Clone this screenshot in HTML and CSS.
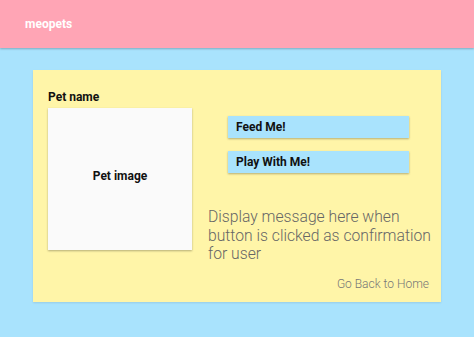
FILE: index.html
```html
<!DOCTYPE html>
<html lang="en">
<head>
    <meta charset="UTF-8">
    <meta name="viewport" content="width=device-width, initial-scale=1.0">
    <title>meopets</title>
    <link rel="stylesheet" href="styles.css">
</head>
<body>
    <header class="topbar">
        <span class="brand">meopets</span>
    </header>

    <div class="card">
        <h2 class="pet-name">Pet name</h2>
        <div class="row">
            <div class="pet-image"><span>Pet image</span></div>
            <div class="side">
                <div class="actions">
                    <button class="action">Feed Me!</button>
                    <button class="action">Play With Me!</button>
                </div>
                <p class="message">Display message here when button is clicked as confirmation for user</p>
            </div>
        </div>
        <div class="footer">
            <a href="#" class="home-link">Go Back to Home</a>
        </div>
    </div>
</body>
</html>
```

FILE: styles.css
```css
body {
    font-family: Roboto, "Liberation Sans", Arial, sans-serif;
    margin: 0;
    padding: 0;
    background-color: #a9e3fd;
    height: 337px;
    overflow: hidden;
}

.topbar {
    height: 48px;
    background-color: #ffa5b5;
    box-shadow: 0 1px 2px rgba(0, 0, 0, 0.25);
    display: flex;
    align-items: center;
    padding-left: 25px;
    box-sizing: border-box;
}

.brand {
    color: #fff;
    font-weight: bold;
    font-size: 12px;
    margin-top: -1px;
}

.card {
    margin: 22px 33px 0;
    background-color: #fff5a8;
    padding: 20px 12px 12px 15px;
    height: 232px;
    box-sizing: border-box;
    box-shadow: 0 1px 2px rgba(0, 0, 0, 0.1);
}

.pet-name {
    margin: 0 0 4px;
    font-size: 12px;
    font-weight: bold;
    color: #111;
    line-height: 14px;
}

.row {
    display: flex;
}

.pet-image {
    flex-shrink: 0;
    width: 144px;
    height: 142px;
    background-color: #fafafa;
    box-shadow: 0 1px 2px rgba(0, 0, 0, 0.3);
    display: flex;
    align-items: center;
    justify-content: center;
    font-size: 12px;
    font-weight: bold;
    color: #111;
}

.pet-image span {
    margin-top: -6px;
}

.side {
    flex: 1;
    padding-left: 16px;
}

.actions {
    display: flex;
    flex-direction: column;
    gap: 13px;
    margin: 8px 0 0 20px;
    width: 181px;
}

.action {
    height: 22px;
    background-color: #a9e3fd;
    border: none;
    box-shadow: 0 1px 2px rgba(0, 0, 0, 0.3);
    text-align: left;
    padding: 0 8px;
    font-family: inherit;
    font-size: 12px;
    font-weight: bold;
    color: #111;
}

.message {
    margin: 35px -6px 0 0;
    font-size: 15.7px;
    font-weight: 300;
    line-height: 18.5px;
    color: #666;
}

.footer {
    text-align: right;
    margin-top: 9px;
}

.home-link {
    font-size: 12px;
    font-weight: 300;
    color: #777;
    text-decoration: none;
}
```
